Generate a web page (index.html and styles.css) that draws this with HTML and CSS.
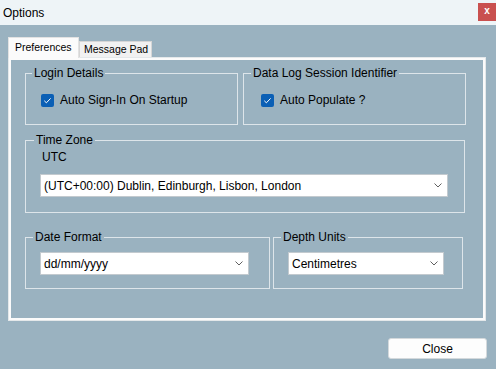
FILE: index.html
```html
<!DOCTYPE html>
<html>
<head>
<meta charset="utf-8">
<link rel="stylesheet" href="styles.css">
</head>
<body>
<div class="window">
  <div class="titlebar">
    <span class="title">Options</span>
    <span class="close-x">x</span>
  </div>
  <div class="content">
    <div class="tabs">
      <div class="tab active">Preferences</div>
      <div class="tab">Message Pad</div>
    </div>
    <div class="panel">
      <div class="page">
        <div class="row row-top">
          <fieldset class="group g-login">
            <legend>Login Details</legend>
            <label class="check">
              <svg class="box" width="13" height="13" viewBox="0 0 13 13"><rect x="0" y="0" width="13" height="13" rx="2" fill="#0a5fb5"/><path d="M3.3 6.8 L5.4 8.8 L9.6 4.4" fill="none" stroke="#fff" stroke-width="1"/></svg>
              <span>Auto Sign-In On Startup</span>
            </label>
          </fieldset>
          <fieldset class="group g-datalog">
            <legend>Data Log Session Identifier</legend>
            <label class="check">
              <svg class="box" width="13" height="13" viewBox="0 0 13 13"><rect x="0" y="0" width="13" height="13" rx="2" fill="#0a5fb5"/><path d="M3.3 6.8 L5.4 8.8 L9.6 4.4" fill="none" stroke="#fff" stroke-width="1"/></svg>
              <span>Auto Populate ?</span>
            </label>
          </fieldset>
        </div>
        <fieldset class="group g-tz">
          <legend>Time Zone</legend>
          <div class="tz-name">UTC</div>
          <div class="combo c-tz">
            <span>(UTC+00:00) Dublin, Edinburgh, Lisbon, London</span>
            <svg class="chev" width="8" height="5" viewBox="0 0 8 5"><path d="M0.5 0.5 L4 4 L7.5 0.5" fill="none" stroke="#606060" stroke-width="1"/></svg>
          </div>
        </fieldset>
        <div class="row row-bottom">
          <fieldset class="group g-date">
            <legend>Date Format</legend>
            <div class="combo c-date">
              <span>dd/mm/yyyy</span>
              <svg class="chev" width="8" height="5" viewBox="0 0 8 5"><path d="M0.5 0.5 L4 4 L7.5 0.5" fill="none" stroke="#606060" stroke-width="1"/></svg>
            </div>
          </fieldset>
          <fieldset class="group g-depth">
            <legend>Depth Units</legend>
            <div class="combo c-depth">
              <span>Centimetres</span>
              <svg class="chev" width="8" height="5" viewBox="0 0 8 5"><path d="M0.5 0.5 L4 4 L7.5 0.5" fill="none" stroke="#606060" stroke-width="1"/></svg>
            </div>
          </fieldset>
        </div>
      </div>
    </div>
    <div class="footer">
      <button class="btn">Close</button>
    </div>
  </div>
</div>
</body>
</html>
```

FILE: styles.css
```css
html, body {
  margin: 0;
  padding: 0;
}
body {
  width: 496px;
  height: 369px;
  background: #9ab2c0;
  font-family: "Liberation Sans", Arial, sans-serif;
  font-size: 12px;
  color: #000;
  overflow: hidden;
}
.window {
  width: 496px;
  height: 369px;
  display: flex;
  flex-direction: column;
}
.titlebar {
  height: 25px;
  background: #eef4f7;
  display: flex;
  align-items: center;
  padding-left: 3px;
  box-sizing: border-box;
}
.title {
  font-size: 12px;
  line-height: 14px;
}
.close-x {
  margin-left: auto;
  align-self: flex-start;
  margin-top: 3px;
  width: 18px;
  height: 18px;
  background: #c9504f;
  color: #fff;
  font-weight: bold;
  font-size: 10px;
  line-height: 16px;
  text-align: center;
}
.content {
  padding: 12px 0 0 8px;
  display: flex;
  flex-direction: column;
}
.tabs {
  display: flex;
  align-items: flex-end;
  height: 20px;
  position: relative;
  z-index: 1;
}
.tab {
  box-sizing: border-box;
  font-size: 10.5px;
  line-height: 14px;
  background: #f1f1f1;
  border: 1px solid #d6d6d6;
  border-bottom: none;
  width: 73px;
  height: 16px;
  padding-left: 4px;
  white-space: nowrap;
}
.tab.active {
  width: 71px;
  height: 21px;
  margin-bottom: -1px;
  background: #fbfbfb;
  border-color: #e2e2e2;
  padding-left: 6px;
  padding-top: 2px;
}
.panel {
  width: 478px;
  height: 264px;
  box-sizing: border-box;
  border: 1px solid #e4e8ea;
}
.page {
  height: 100%;
  box-sizing: border-box;
  border: 2px solid #fbfbfb;
  padding: 6px 0 0 14px;
}
.row {
  display: flex;
}
.row-top {
  gap: 5px;
}
.row-bottom {
  gap: 3px;
  margin-top: 17px;
}
.group {
  margin: 0;
  padding: 0 0 0 14px;
  min-width: 0;
  box-sizing: border-box;
  border: 1px solid #dde5ea;
}
.group legend {
  padding: 0 2px;
  margin-left: -7px;
  line-height: 14px;
  font-size: 12px;
}
.g-login {
  width: 213px;
  height: 59px;
  padding-left: 15px;
}
.g-login legend {
  margin-left: -9px;
}
.g-datalog {
  width: 223px;
  height: 59px;
  padding-left: 17px;
}
.g-datalog legend {
  margin-left: -10px;
}
.g-tz {
  width: 440px;
  height: 80px;
  margin-top: 8px;
}
.g-tz legend {
  margin-left: -6px;
}
.g-date {
  width: 245px;
  height: 59px;
}
.g-depth {
  width: 190px;
  height: 59px;
}
.check {
  display: flex;
  align-items: center;
  gap: 6px;
  height: 14px;
  margin-top: 13px;
  line-height: 14px;
}
.box {
  display: block;
  flex: none;
}
.tz-name {
  margin-top: 3px;
  padding-left: 2px;
  line-height: 14px;
}
.combo {
  box-sizing: border-box;
  height: 23px;
  background: #fff;
  border: 1px solid #c3cacf;
  display: flex;
  align-items: center;
  padding: 0 5px 0 3px;
  line-height: 14px;
}
.combo span {
  flex: 1;
  white-space: nowrap;
}
.chev {
  display: block;
  flex: none;
}
.c-tz {
  width: 408px;
  margin-top: 10px;
}
.g-date .combo,
.g-depth .combo {
  margin-top: 8px;
}
.c-date {
  width: 209px;
}
.c-depth {
  width: 156px;
}
.footer {
  display: flex;
  justify-content: flex-end;
  padding-right: 9px;
  margin-top: 17px;
}
.btn {
  width: 99px;
  height: 21px;
  box-sizing: border-box;
  background: #fdfdfd;
  border: 1px solid #d4d9dc;
  border-radius: 3px;
  font-family: "Liberation Sans", Arial, sans-serif;
  font-size: 12px;
  color: #000;
  padding: 0;
  line-height: 14px;
}
```
